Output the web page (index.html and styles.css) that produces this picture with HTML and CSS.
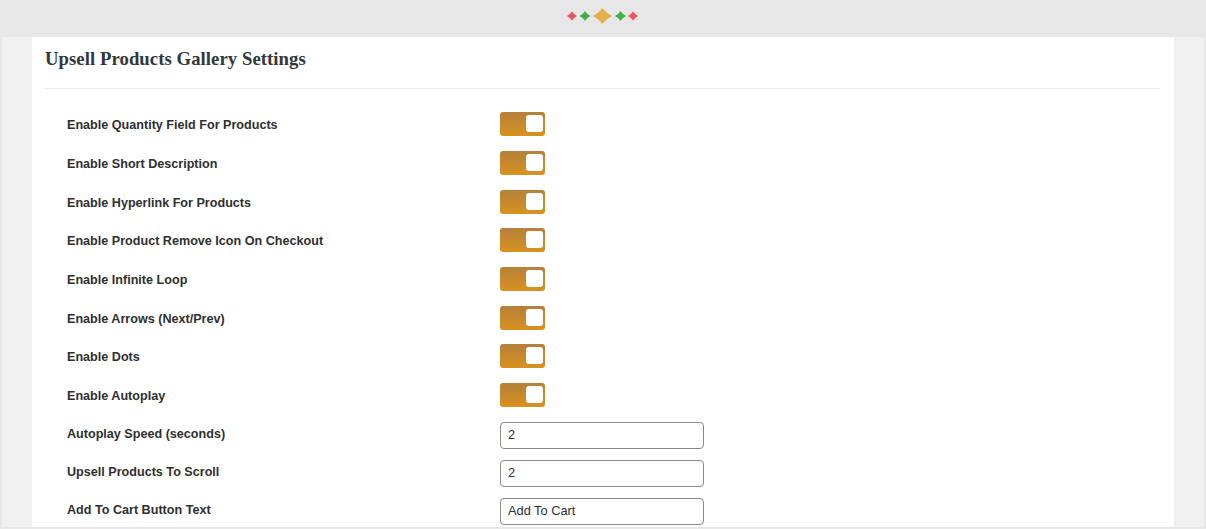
FILE: index.html
```html
<!DOCTYPE html>
<html lang="en">
<head>
    <meta charset="UTF-8">
    <meta name="viewport" content="width=device-width, initial-scale=1.0">
    <title>Upsell Products Gallery Settings</title>
    <link rel="stylesheet" href="styles.css">
</head>
<body>
    <div class="top-bar">
        <svg class="divider-icon" width="74" height="18" viewBox="0 0 74 18">
            <path fill="#f0525a" d="M6 4.500 L8.100 6.900 L11 9 L8.100 11.100 L6 13.500 L3.900 11.100 L1 9 L3.900 6.900 Z"/>
            <path fill="#3cb44a" d="M19 4 L21.200 6.800 L24.500 9 L21.200 11.200 L19 14 L16.800 11.200 L13.500 9 L16.800 6.800 Z"/>
            <path fill="#e5b04c" d="M36.500 1 L40.500 5.400 L46 9 L40.500 12.600 L36.500 17 L32.500 12.600 L27 9 L32.500 5.400 Z"/>
            <path fill="#3cb44a" d="M54.500 4 L56.700 6.800 L60 9 L56.700 11.200 L54.500 14 L52.300 11.200 L49 9 L52.300 6.800 Z"/>
            <path fill="#f0525a" d="M67 4.500 L69.100 6.900 L72 9 L69.100 11.100 L67 13.500 L64.900 11.100 L62 9 L64.900 6.900 Z"/>
        </svg>
    </div>
    <div class="wrap">
        <div class="panel">
            <h2 class="panel-title">Upsell Products Gallery Settings</h2>
            <div class="settings">
                <div class="row"><label class="row-label">Enable Quantity Field For Products</label><span class="toggle"><span class="knob"></span></span></div>
                <div class="row"><label class="row-label">Enable Short Description</label><span class="toggle"><span class="knob"></span></span></div>
                <div class="row"><label class="row-label">Enable Hyperlink For Products</label><span class="toggle"><span class="knob"></span></span></div>
                <div class="row"><label class="row-label">Enable Product Remove Icon On Checkout</label><span class="toggle"><span class="knob"></span></span></div>
                <div class="row"><label class="row-label">Enable Infinite Loop</label><span class="toggle"><span class="knob"></span></span></div>
                <div class="row"><label class="row-label">Enable Arrows (Next/Prev)</label><span class="toggle"><span class="knob"></span></span></div>
                <div class="row"><label class="row-label">Enable Dots</label><span class="toggle"><span class="knob"></span></span></div>
                <div class="row"><label class="row-label">Enable Autoplay</label><span class="toggle"><span class="knob"></span></span></div>
                <div class="row row-input"><label class="row-label">Autoplay Speed (seconds)</label><input class="text-field" type="text" value="2"></div>
                <div class="row row-input"><label class="row-label">Upsell Products To Scroll</label><input class="text-field" type="text" value="2"></div>
                <div class="row row-input"><label class="row-label">Add To Cart Button Text</label><input class="text-field" type="text" value="Add To Cart"></div>
            </div>
        </div>
    </div>
</body>
</html>
```

FILE: styles.css
```css
html, body {
    height: 100%;
}

body {
    margin: 0;
    height: 529px;
    overflow: hidden;
    background: #e7e7e7;
    font-family: "Liberation Sans", Arial, sans-serif;
    color: #2f2f2f;
}

.top-bar {
    height: 37px;
    display: flex;
    justify-content: center;
    align-items: flex-start;
}

.divider-icon {
    margin-top: 7px;
}

.wrap {
    height: 490px;
    margin: 0 2px;
    padding: 0 30px;
    background: #f0f0f0;
    overflow: hidden;
    box-sizing: border-box;
}

.panel {
    height: 490px;
    background: #fff;
    padding: 0 14px 0 13px;
    box-sizing: border-box;
    overflow: hidden;
}

.panel-title {
    margin: 0;
    padding: 12px 0 19px;
    font-family: "Liberation Serif", "Times New Roman", serif;
    font-size: 18.72px;
    line-height: 20px;
    font-weight: 700;
    letter-spacing: 0.06px;
    color: #32373c;
    border-bottom: 1px solid #eee;
}

.settings {
    padding: 23.2px 0 0 22px;
}

.row {
    display: flex;
    align-items: flex-start;
    height: 38.7px;
}

.row-input {
    height: 38px;
}

.row-label {
    width: 433px;
    flex: none;
    font-size: 12.6px;
    font-weight: 700;
    line-height: 27px;
}

.row-input .row-label {
    line-height: 25px;
}

.toggle {
    display: flex;
    align-items: center;
    justify-content: flex-end;
    width: 45px;
    height: 24px;
    padding-right: 2px;
    box-sizing: border-box;
    border-radius: 3px;
    background: linear-gradient(to bottom, #b5803a, #d9921f);
}

.knob {
    width: 17px;
    height: 17px;
    margin-top: -1px;
    border-radius: 3px;
    background: #fff;
}

.text-field {
    width: 204px;
    height: 27px;
    padding: 0 7px 2px;
    box-sizing: border-box;
    border: 1px solid #8a8a8a;
    border-radius: 4px;
    background: #fff;
    font-family: "Liberation Sans", Arial, sans-serif;
    font-size: 12.8px;
    color: #2f2f2f;
}
```
